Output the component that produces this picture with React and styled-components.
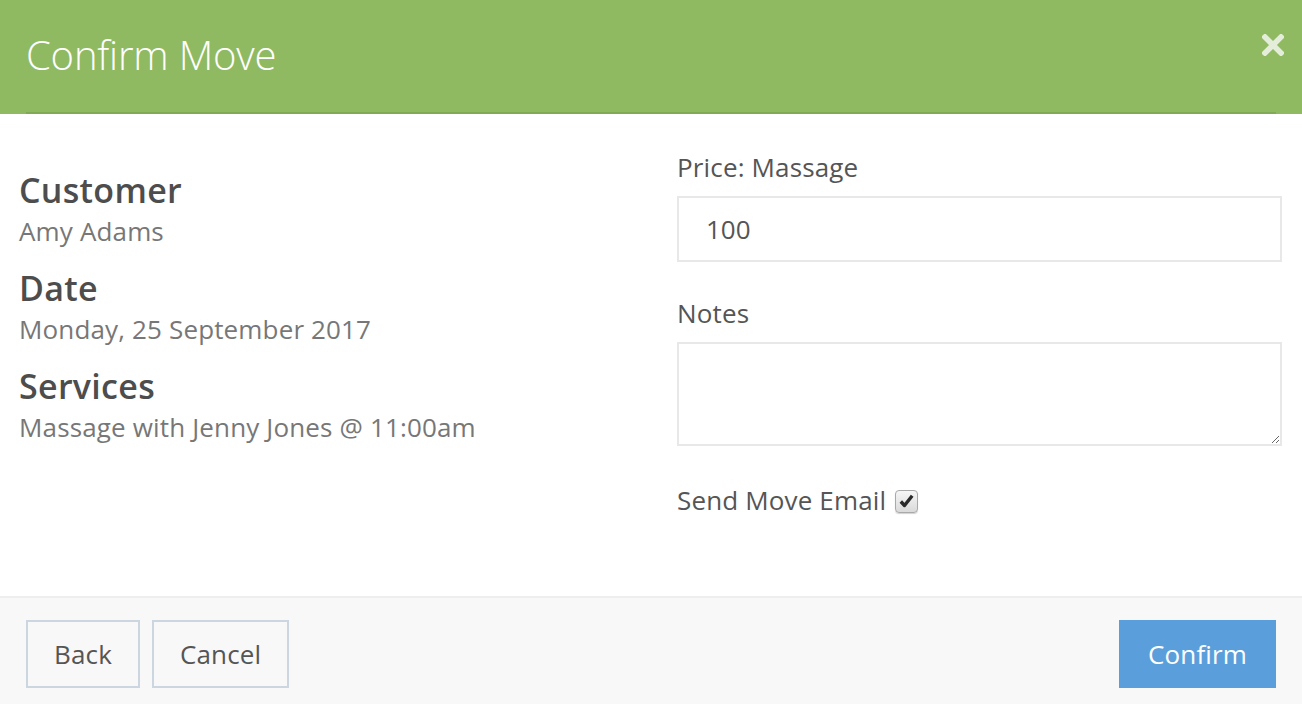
import React from 'react'
import styled, { createGlobalStyle } from 'styled-components'

const GlobalStyle = createGlobalStyle`
  html, body {
    margin: 0;
    padding: 0;
    background: #fff;
  }
  body {
    font-family: 'Open Sans', 'Noto Sans', sans-serif;
    color: #555;
  }
  * { box-sizing: border-box; }
`

const Modal = styled.div`
  width: 1302px;
  height: 704px;
  display: flex;
  flex-direction: column;
  overflow: hidden;
`

const Header = styled.header`
  position: relative;
  height: 114px;
  flex-shrink: 0;
  background: #8fba62;
  display: flex;
  align-items: center;
  justify-content: space-between;
  padding: 0 18px 6px 26px;

  &::after {
    content: '';
    position: absolute;
    left: 26px;
    right: 26px;
    bottom: 0;
    height: 2px;
    background: #80aa55;
  }
`

const Title = styled.h1`
  margin: 0;
  font-weight: 300;
  font-size: 40px;
  color: #fff;
  letter-spacing: -0.2px;
`

const Close = styled.button`
  border: 0;
  background: none;
  padding: 0;
  width: 22px;
  height: 22px;
  cursor: pointer;
  margin-top: -18px;
  opacity: 0.85;
`

const Body = styled.main`
  flex: 1;
  min-height: 0;
  display: grid;
  grid-template-columns: 1fr 605px;
  column-gap: 20px;
  padding: 0 20px 0 19px;
`

const Details = styled.section`
  padding-top: 55px;
  display: flex;
  flex-direction: column;
  gap: 18px;
`

const Detail = styled.div``

const DetailTitle = styled.h3`
  margin: 0;
  font-size: 34px;
  font-weight: 600;
  line-height: 42px;
  letter-spacing: 0.3px;
  color: #4d4d4d;
`

const DetailText = styled.p`
  margin: 2px 0 0;
  font-size: 26px;
  line-height: 36px;
  letter-spacing: 0.15px;
  color: #777;
`

const Form = styled.section`
  padding-top: 35px;
  display: flex;
  flex-direction: column;
`

const Label = styled.label`
  display: block;
  font-size: 26px;
  line-height: 36px;
  letter-spacing: 0.15px;
  color: #555;
  margin-bottom: 11px;
`

const Field = styled.div`
  margin-bottom: ${p => p.$gap || 0}px;
`

const Input = styled.input`
  display: block;
  width: 100%;
  height: 66px;
  border: 2px solid #e8e8e8;
  padding: 0 27px;
  font-family: inherit;
  font-size: 26px;
  color: #555;
  outline: none;
  background: #fff;
`

const TextArea = styled.textarea`
  display: block;
  width: 100%;
  height: 104px;
  border: 2px solid #e8e8e8;
  padding: 12px 27px;
  font-family: inherit;
  font-size: 26px;
  color: #555;
  outline: none;
  resize: vertical;
  background: #fff;
`

const CheckRow = styled.label`
  display: flex;
  align-items: center;
  gap: 9px;
  font-size: 26px;
  letter-spacing: 0.15px;
  color: #555;
  line-height: 36px;
`

const CheckBox = styled.span`
  width: 23px;
  height: 23px;
  border-radius: 4px;
  border: 1px solid #a9a9a9;
  background: linear-gradient(#f6f6f6, #dadada);
  box-shadow: 0 1px 1px rgba(0, 0, 0, 0.18);
  display: flex;
  align-items: center;
  justify-content: center;
  margin-top: 2px;
`

const Footer = styled.footer`
  height: 108px;
  flex-shrink: 0;
  background: #f8f8f8;
  border-top: 2px solid #eeeeee;
  display: flex;
  align-items: flex-start;
  justify-content: space-between;
  padding: 22px 26px 0;
`

const ButtonGroup = styled.div`
  display: flex;
  gap: 12px;
`

const Button = styled.button`
  height: 68px;
  padding: 0 ${p => p.$pad || 27}px;
  font-family: 'Open Sans', sans-serif;
  font-size: 26px;
  letter-spacing: 0.15px;
  color: ${p => (p.$primary ? '#fff' : '#555')};
  background: ${p => (p.$primary ? '#5a9fdb' : '#f8f8f8')};
  border: 2px solid ${p => (p.$primary ? '#5a9fdb' : '#ccd6e0')};
  cursor: pointer;
`

const details = [
  { title: 'Customer', text: 'Amy Adams' },
  { title: 'Date', text: 'Monday, 25 September 2017' },
  { title: 'Services', text: 'Massage with Jenny Jones @ 11:00am' }
]

const App = () => (
  <>
    <GlobalStyle />
    <Modal>
      <Header>
        <Title>Confirm Move</Title>
        <Close aria-label='Close'>
          <svg width='22' height='22' viewBox='0 0 22 22'>
            <path d='M3 3 L19 19 M19 3 L3 19' stroke='#f2f6ee' strokeWidth='5.5' strokeLinecap='square' />
          </svg>
        </Close>
      </Header>

      <Body>
        <Details>
          {details.map(d => (
            <Detail key={d.title}>
              <DetailTitle>{d.title}</DetailTitle>
              <DetailText>{d.text}</DetailText>
            </Detail>
          ))}
        </Details>

        <Form>
          <Field $gap={33}>
            <Label>Price: Massage</Label>
            <Input defaultValue='100' />
          </Field>
          <Field $gap={36}>
            <Label>Notes</Label>
            <TextArea />
          </Field>
          <CheckRow>
            Send Move Email
            <CheckBox>
              <svg width='15' height='14' viewBox='0 0 15 14'>
                <path d='M1.8 7.5 L5.5 11.5 L13.2 1.8' fill='none' stroke='#2a2a2a' strokeWidth='3.4' strokeLinejoin='round' />
              </svg>
            </CheckBox>
          </CheckRow>
        </Form>
      </Body>

      <Footer>
        <ButtonGroup>
          <Button $pad={26}>Back</Button>
          <Button $pad={26}>Cancel</Button>
        </ButtonGroup>
        <Button $primary $pad={27}>Confirm</Button>
      </Footer>
    </Modal>
  </>
)

export default App
